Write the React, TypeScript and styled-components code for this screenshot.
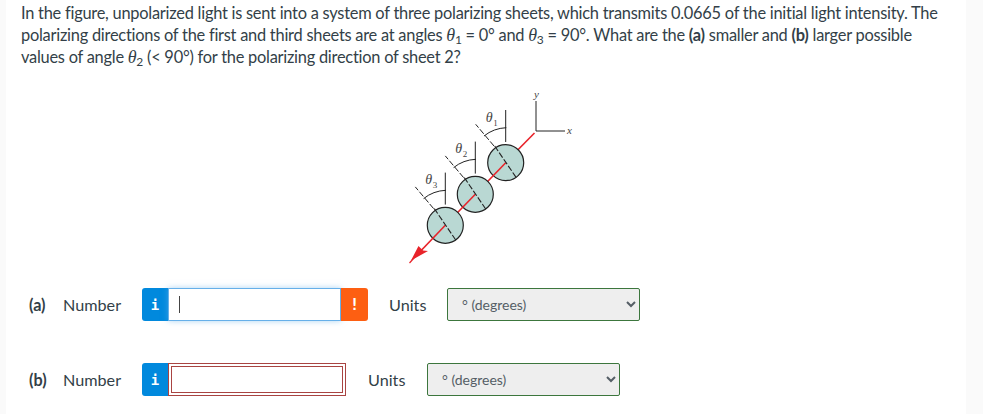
import React from "react";
import styled, { createGlobalStyle } from "styled-components";

const Global = createGlobalStyle`
  html, body { margin: 0; padding: 0; background: #ffffff; }
  body { font-family: "Lato", "Liberation Sans", sans-serif; color: #333f48; }
`;

const Page = styled.div`
  width: 983px;
  height: 414px;
  overflow: hidden;
  background: #fafafa;
  display: flex;
`;

const Sheet = styled.main`
  margin-left: 6px;
  width: 960px;
  height: 414px;
  background: #ffffff;
  box-sizing: border-box;
  padding: 2px 0 0 15px;
`;

const Question = styled.p`
  margin: 0;
  width: 925px;
  font-size: 16.4px;
  letter-spacing: -0.245px;
  line-height: 22px;
  color: #333f48;
`;

const Theta = styled.i`
  font-family: "Liberation Serif", serif;
  font-size: 18px;
  line-height: 0;
`;

const Sub = styled.sub`
  font-size: 12px;
  line-height: 0;
  vertical-align: -3px;
`;

const Figure = styled.div`
  height: 202px;
  padding-left: 377px;
  padding-top: 18px;
`;

const Rows = styled.div`
  display: flex;
  flex-direction: column;
  gap: 42px;
`;

const Row = styled.div`
  display: flex;
  align-items: center;
  height: 33px;
  padding-left: 8px;
  font-size: 16.2px;
`;

const Part = styled.b`
  width: 34px;
  font-weight: 700;
`;

const Label = styled.span`
  width: 79px;
`;

const InfoButton = styled.button`
  width: 26px;
  height: 33px;
  padding: 0;
  border: 0;
  border-radius: 3px 0 0 3px;
  background: #0189dd;
  color: #fff;
  font-family: "DejaVu Sans Mono", monospace;
  font-weight: 700;
  font-size: 14px;
`;

const NumberField = styled.div<{ $invalid?: boolean }>`
  box-sizing: border-box;
  height: 33px;
  width: ${(p) => (p.$invalid ? "178px" : "173px")};
  background: #fff;
  display: flex;
  align-items: center;
  padding-left: 10px;
  border: ${(p) => (p.$invalid ? "4px double #a94442" : "1px solid #66afe9")};
  box-shadow: ${(p) => (p.$invalid ? "none" : "0 0 6px rgba(102,175,233,.55)")};
`;

const Caret = styled.span`
  width: 1px;
  height: 17px;
  background: #444;
`;

const Warning = styled.div`
  width: 27px;
  height: 33px;
  border-radius: 0 3px 3px 0;
  background: #fd5f12;
  color: #fff;
  display: flex;
  align-items: center;
  justify-content: center;
  font-family: "DejaVu Sans Mono", monospace;
  font-weight: 700;
  font-size: 16px;
`;

const Units = styled.span<{ $first?: boolean }>`
  margin-left: ${(p) => (p.$first ? "21px" : "22px")};
  width: ${(p) => (p.$first ? "58px" : "59px")};
`;

const UnitSelect = styled.select`
  box-sizing: border-box;
  width: 193px;
  height: 33px;
  border: 1px solid #3c763d;
  border-radius: 2px;
  background: #eeeeee;
  color: #555e66;
  font-family: "Lato", sans-serif;
  font-size: 14px;
  padding-left: 10px;
`;

const PolarizerFigure = () => {
  const sheets = [
    { cx: 507.7, cy: 161.7, label: "1", nx: 477.3, ny: 193.3 },
    { cx: 477.3, cy: 193.3, label: "2", nx: 447.3, ny: 224.3 },
    { cx: 447.3, cy: 224.3, label: "3", nx: 416, ny: 257 },
  ];
  return (
    <svg width="190" height="180" viewBox="400 85 190 180">
      <path d="M538 100V130H567" fill="none" stroke="#222" strokeWidth="1" />
      <text x="536" y="97" fontFamily="Liberation Serif" fontStyle="italic" fontSize="11" fill="#444">y</text>
      <text x="569" y="133" fontFamily="Liberation Serif" fontStyle="italic" fontSize="11" fill="#444">x</text>
      <path d="M536.5 132L505 164" stroke="#e8232a" strokeWidth="1.6" />
      {sheets.map((s) => (
        <g key={s.label}>
          <line x1={s.cx} y1={s.cy - 20.7} x2={s.cx} y2={s.cy - 52.7} stroke="#222" strokeWidth="1" />
          <line x1={s.cx - 11.7} y1={s.cy - 16.7} x2={s.cx - 30} y2={s.cy - 38.4} stroke="#222" strokeWidth="1" strokeDasharray="6 2" />
          <path d={`M${s.cx - 21.7} ${s.cy - 26.7}Q${s.cx - 12} ${s.cy - 34.5} ${s.cx + 0.6} ${s.cy - 35}`} fill="none" stroke="#222" strokeWidth="1" />
          <circle cx={s.cx} cy={s.cy} r="18" fill="#b9d8d3" stroke="#222" strokeWidth="1.2" />
          <line x1={s.cx} y1={s.cy} x2={s.nx} y2={s.ny} stroke="#e8232a" strokeWidth="1.6" />
          <line x1={s.cx - 11} y1={s.cy - 16.7} x2={s.cx + 10.6} y2={s.cy + 15} stroke="#222" strokeWidth="1.1" strokeDasharray="6 2" />
          <text x={s.cx - 20} y={s.cy - 41} fontFamily="Liberation Serif" fontStyle="italic" fontSize="14" fill="#444">θ</text>
          <text x={s.cx - 12.5} y={s.cy - 37} fontFamily="Liberation Serif" fontSize="9" fill="#444">{s.label}</text>
        </g>
      ))}
      <path d="M416 257L411.5 262" stroke="#e8232a" strokeWidth="1.2" />
      <path d="M413 259.5L420.5 245L425 249.5L430 250Z" fill="#e8232a" />
    </svg>
  );
};

export default function App() {
  return (
    <Page>
      <Global />
      <Sheet>
        <Question>
          In the figure, unpolarized light is sent into a system of three polarizing sheets, which transmits 0.0665 of the initial light intensity. The polarizing directions of the first and third sheets are at angles <Theta>θ</Theta><Sub>1</Sub> = 0° and <Theta>θ</Theta><Sub>3</Sub> = 90°. What are the <b>(a)</b> smaller and <b>(b)</b> larger possible values of angle <Theta>θ</Theta><Sub>2</Sub> (&lt; 90°) for the polarizing direction of sheet 2?
        </Question>
        <Figure>
          <PolarizerFigure />
        </Figure>
        <Rows>
          <Row>
            <Part>(a)</Part>
            <Label>Number</Label>
            <InfoButton>i</InfoButton>
            <NumberField><Caret /></NumberField>
            <Warning>!</Warning>
            <Units $first>Units</Units>
            <UnitSelect defaultValue="deg"><option value="deg">° (degrees)</option></UnitSelect>
          </Row>
          <Row>
            <Part>(b)</Part>
            <Label>Number</Label>
            <InfoButton>i</InfoButton>
            <NumberField $invalid />
            <Units>Units</Units>
            <UnitSelect defaultValue="deg"><option value="deg">° (degrees)</option></UnitSelect>
          </Row>
        </Rows>
      </Sheet>
    </Page>
  );
}
